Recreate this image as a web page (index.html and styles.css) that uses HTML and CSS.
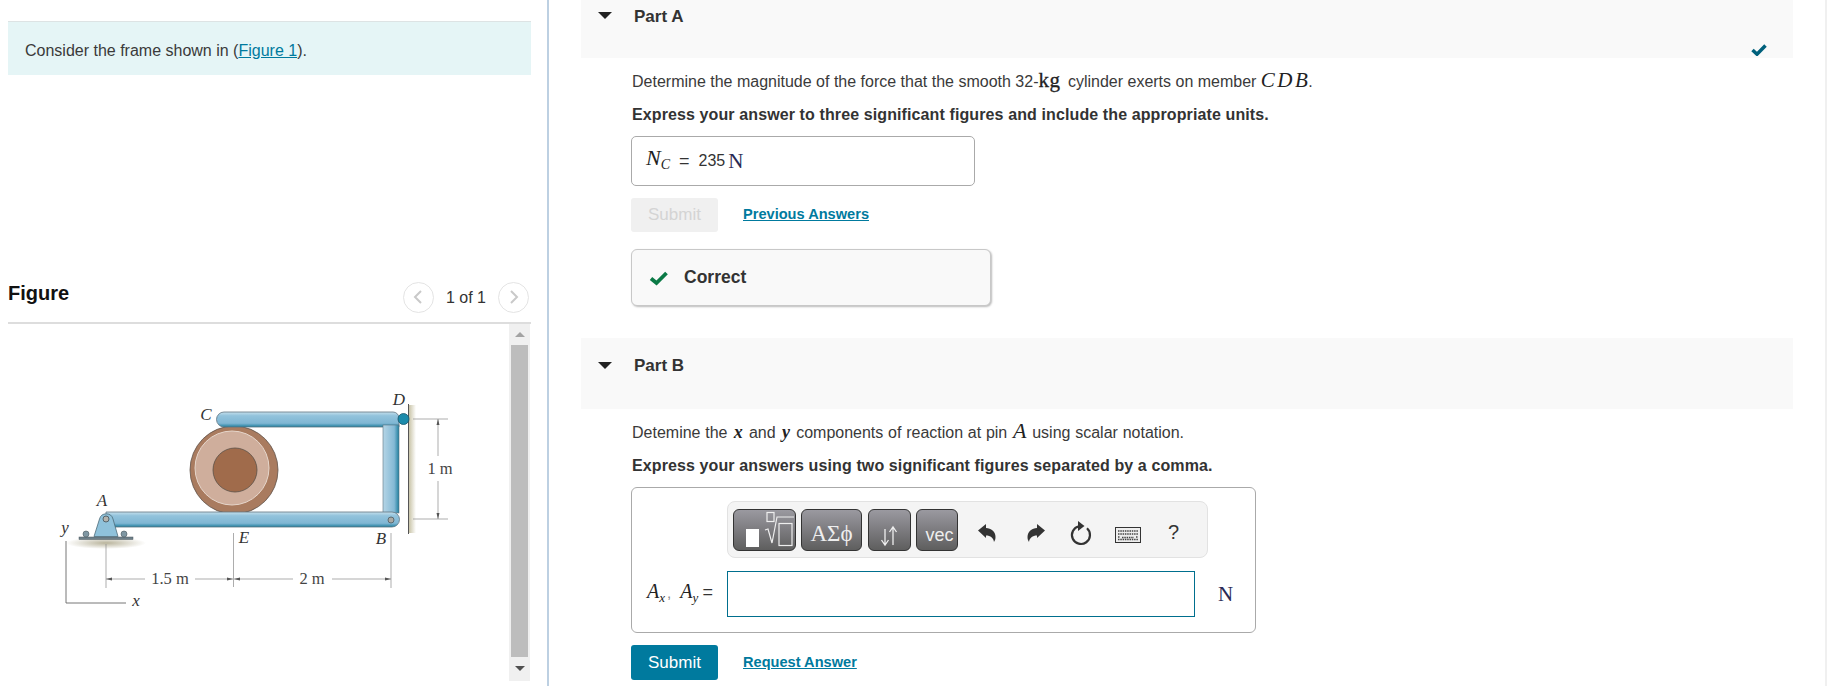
FILE: index.html
```html
<!DOCTYPE html>
<html lang="en">
<head>
<meta charset="utf-8">
<title>Frame problem</title>
<link rel="stylesheet" href="styles.css">
</head>
<body>
<div class="page">
  <aside class="left">
    <div class="intro">Consider the frame shown in (<a href="#" class="link">Figure 1</a>).</div>
    <div class="fig-head">
      <h2 class="fig-title">Figure</h2>
      <div class="pager">
        <span class="circle"><svg width="14" height="18" viewBox="0 0 14 18"><path class="chev" d="M10 3 4 9l6 6"/></svg></span>
        <span class="count">1 of 1</span>
        <span class="circle"><svg width="14" height="18" viewBox="0 0 14 18"><path class="chev" d="M4 3l6 6-6 6"/></svg></span>
      </div>
    </div>
    <div class="fig-body">
      <div class="fig-area">
        <svg class="frame" width="440" height="260" viewBox="0 0 440 260">
          <defs>
            <linearGradient id="wall" x1="0" x2="1" y1="0" y2="0"><stop offset="0" stop-color="#c9c4a8"/><stop offset="1" stop-color="#fff"/></linearGradient>
            <linearGradient id="bar" x1="0" x2="0" y1="0" y2="1"><stop offset="0" stop-color="#c5dfec"/><stop offset=".25" stop-color="#93c3dc"/><stop offset=".75" stop-color="#7fb6d3"/><stop offset="1" stop-color="#1f7f9e"/></linearGradient>
            <linearGradient id="vbar" x1="0" x2="1" y1="0" y2="0"><stop offset="0" stop-color="#b5d5e6"/><stop offset=".7" stop-color="#84b9d5"/><stop offset="1" stop-color="#1f7f9e"/></linearGradient>
            <radialGradient id="shade" cx=".5" cy=".5" r=".5"><stop offset="0" stop-color="#b9b49c"/><stop offset="1" stop-color="#fff"/></radialGradient>
          </defs>
          <g class="art">
            <rect x="369" y="34" width="7" height="128" fill="url(#wall)"/>
            <line x1="368.500" y1="33" x2="368.500" y2="163" class="dark"/>
            <ellipse cx="66" cy="172" rx="40" ry="6" fill="url(#shade)"/>
            <circle cx="194" cy="99" r="44" fill="#a97b5f" stroke="#5e5148" stroke-width=".8"/>
            <circle cx="192" cy="97" r="37" fill="#cfae9c" stroke="#e6d6cb" stroke-width="1"/>
            <circle cx="195" cy="99" r="22" fill="#a06b4b" stroke="#5b5048" stroke-width=".8"/>
            <path d="M184 41H353a6 6 0 0 1 6 6V56H184a7.500 7.500 0 0 1 0-15z" fill="url(#bar)" stroke="#5f7480" stroke-width=".8"/>
            <rect x="343" y="54" width="16" height="88" fill="url(#vbar)" stroke="#5f7480" stroke-width=".6"/>
            <path d="M66 141H352a7 7 0 0 1 0 15H66z" fill="url(#bar)" stroke="#5f7480" stroke-width=".8"/>
            <circle cx="351" cy="149" r="3" fill="#a9a9a4" stroke="#5c6a70"/>
            <circle cx="363.500" cy="48" r="5.500" fill="#1c8bab" stroke="#17566a" stroke-width=".8"/>
            <rect x="39" y="166" width="54" height="2.500" fill="#6d7f88" stroke="#4e5a60" stroke-width=".5"/>
            <circle cx="46" cy="163" r="3" fill="#7f97a3" stroke="#46555c" stroke-width=".6"/>
            <circle cx="84" cy="163" r="3" fill="#7f97a3" stroke="#46555c" stroke-width=".6"/>
            <path d="M54 165.500 59.500 148a7 7 0 0 1 13.500 0L78 165.500z" fill="#8fc2db" stroke="#4d6b79" stroke-width=".8"/>
            <circle cx="66" cy="148" r="3" fill="#b3b3ad" stroke="#55646b"/>
            <path class="thin" d="M66 173v44M193.500 162v54M351 162v55M66 208h39M155 208h38M194 208h59M292 208h59M373 48h35M373 148h35M398 48v37M398 110v38"/>
            <path class="axis" d="M26 170v62h60"/>
            <path class="tip" d="M66 208l6-1.500v3zM193 208l-6-1.500v3zM194 208l6-1.500v3zM351 208l-6-1.500v3zM398 48l-1.500 6h3zM398 148l-1.500-6h3z"/>
          </g>
          <text class="lbl" x="62" y="135" text-anchor="middle">A</text>
          <text class="lbl" x="166" y="49" text-anchor="middle">C</text>
          <text class="lbl" x="359" y="34" text-anchor="middle">D</text>
          <text class="lbl" x="204" y="172" text-anchor="middle">E</text>
          <text class="lbl" x="341" y="173" text-anchor="middle">B</text>
          <text class="lbl" x="25" y="162" text-anchor="middle">y</text>
          <text class="lbl" x="96" y="235" text-anchor="middle">x</text>
          <text class="dim" x="130" y="213" text-anchor="middle">1.5 m</text>
          <text class="dim" x="272" y="213" text-anchor="middle">2 m</text>
          <text class="dim" x="400" y="103" text-anchor="middle">1 m</text>
        </svg>
      </div>
      <div class="scroll">
        <span class="arrow up"></span>
        <span class="thumb"></span>
        <span class="arrow down"></span>
      </div>
    </div>
  </aside>

  <main class="right">
    <header class="part part-a">
      <span class="tri"></span>
      <h3 class="part-title">Part A</h3>
      <svg class="done" width="16" height="12" viewBox="0 0 16 12"><path d="M1.500 6 6 10.200 14.500 1.500" /></svg>
    </header>
    <div class="part-body">
      <p class="txt first">Determine the magnitude of the force that the smooth 32-<span class="unit">kg</span> cylinder exerts on member <span class="mvar wide">CDB</span>.</p>
      <p class="txt strong">Express your answer to three significant figures and include the appropriate units.</p>
      <div class="answer">
        <span class="mvar big">N<sub class="msub">C</sub></span><span class="eq">=</span><span class="val">235</span><span class="nunit">N</span>
      </div>
      <div class="actions">
        <button class="btn off" type="button">Submit</button>
        <a href="#" class="link act">Previous Answers</a>
      </div>
      <div class="correct">
        <svg class="ok" width="20" height="16" viewBox="0 0 20 16"><path d="M2 8.500 7.500 13 17.500 3"/></svg>
        <span>Correct</span>
      </div>
    </div>

    <header class="part part-b">
      <span class="tri"></span>
      <h3 class="part-title">Part B</h3>
    </header>
    <div class="part-body">
      <p class="txt first spaced">Detemine the <span class="mvar small">x</span> and <span class="mvar small">y</span> components of reaction at pin <span class="mvar capital">A</span> using scalar notation.</p>
      <p class="txt strong">Express your answers using two significant figures separated by a comma.</p>
      <div class="mathbox">
        <div class="toolbar">
          <span class="tbtn t1">
            <svg width="60" height="40" viewBox="0 0 60 40">
              <rect x="11" y="19" width="13" height="18" fill="#fff"/>
              <g class="tpl">
                <rect x="32" y="2.500" width="7" height="9"/>
                <path d="M30 20l3-1 4 14 5-26h17"/>
                <rect x="44" y="13.500" width="13" height="22"/>
              </g>
            </svg>
          </span>
          <span class="tbtn t2">ΑΣϕ</span>
          <span class="tbtn t3">
            <svg width="24" height="26" viewBox="0 0 24 26">
              <path class="arr" d="M7 8v15M3.500 19 7 24l3.500-5M15 24V7M11.500 11 15 6l3.500 5"/>
            </svg>
          </span>
          <span class="tbtn t4">vec</span>
          <span class="tools">
            <svg class="tool undo" width="20" height="20" viewBox="0 0 20 20"><path d="M1 7.500 9 1v4c5 0 9.500 3.500 9.500 9 0 2-.5 3.500-1.500 5-.5-4-3.500-6.500-8-6.500V15z"/></svg>
            <svg class="tool redo" width="20" height="20" viewBox="0 0 20 20"><path d="M19 7.500 11 1v4C6 5 1.500 8.500 1.500 14c0 2 .5 3.500 1.500 5 .5-4 3.500-6.500 8-6.500V15z"/></svg>
            <svg class="reload" width="24" height="26" viewBox="0 0 24 26"><path class="ring" d="M18 8.300a9 9 0 1 1-8-2.100"/><path class="wedge" d="M9 1v10l6.500-5z"/></svg>
            <svg class="kbd" width="26" height="16" viewBox="0 0 26 16">
              <rect x=".5" y=".5" width="25" height="15" class="kb-o"/>
              <path class="kb-k" d="M3 4h20M3 7h20M3 10h2M7 10.500h12M21 10h2M3 12.500h20"/>
            </svg>
            <span class="help">?</span>
          </span>
        </div>
        <label class="mlabel"><span class="mvar">A<sub class="msub">x</sub></span><span class="comma">,</span> <span class="mvar">A<sub class="msub">y</sub></span> <span class="lab-eq">=</span></label>
        <input class="minput" type="text" aria-label="answer">
        <span class="nunit munit">N</span>
      </div>
      <div class="actions">
        <button class="btn on" type="button">Submit</button>
        <a href="#" class="link act">Request Answer</a>
      </div>
    </div>
  </main>
  <div class="edge"></div>
</div>
</body>
</html>
```
FILE: styles.css
```css
* { box-sizing: border-box; }
html, body { margin: 0; padding: 0; height: 686px; overflow: hidden; background: #fff; }
body { font-family: "Liberation Sans", Arial, sans-serif; font-size: 16px; color: #333; }
.page { display: grid; grid-template-columns: 549px 1fr 2px; height: 686px; overflow: hidden; }
.link { color: #007a9e; text-decoration: underline; }

/* left column */
.left { border-right: 2px solid #bdd0e2; padding-left: 8px; padding-right: 16px; height: 686px; }
.intro { margin-top: 21px; height: 54px; background: #e5f5f6; border-top: 1px solid #dde3e4; padding: 0 0 0 17px; line-height: 57px; font-size: 16px; color: #3a3a3a; }
.fig-head { margin-top: 203px; height: 46px; border-bottom: 2px solid #ddd; display: flex; align-items: center; justify-content: space-between; padding-bottom: 6px; }
.fig-title { margin: -8px 0 0; font-size: 20px; font-weight: 700; color: #111; }
.pager { display: flex; align-items: center; gap: 12px; padding-right: 2px; }
.circle { width: 31px; height: 31px; border: 1px solid #e4e4e4; border-radius: 50%; display: flex; align-items: center; justify-content: center; }
.chev { fill: none; stroke: #c9c9c9; stroke-width: 2; }
.count { font-size: 16px; color: #333; padding-top: 2px; }
.fig-body { display: flex; height: 357px; }
.fig-area { width: 501px; padding: 47px 0 0 32px; }
.frame { display: block; }
.art { filter: blur(.3px); }
.thin { fill: none; stroke: #8a8a8a; stroke-width: .7; }
.axis { fill: none; stroke: #666; stroke-width: .9; }
.tip { fill: #555; }
.dark { stroke: #555; stroke-width: 1; }
.lbl { font: italic 17px "Liberation Serif", serif; fill: #333; }
.dim { font: 16.500px "Liberation Serif", serif; fill: #444; }
.scroll { width: 21px; height: 357px; background: #f0f0f0; display: flex; flex-direction: column; align-items: center; }
.arrow { width: 0; height: 0; border-left: 5px solid transparent; border-right: 5px solid transparent; }
.arrow.up { border-bottom: 5px solid #a3a3a3; margin-top: 8px; margin-bottom: 8px; }
.arrow.down { border-top: 5px solid #505050; margin-top: 9px; }
.thumb { width: 17px; height: 312px; background: #bdbdbd; }

/* right column */
.right { margin-left: 32px; margin-right: 32px; height: 686px; overflow: hidden; }
.edge { background: #f0f0f0; }
.part { background: #f9f9f9; display: flex; padding-left: 17px; }
.part-a { height: 58px; }
.part-b { height: 71px; margin-top: 32px; }
.tri { width: 0; height: 0; margin-top: 12px; border-left: 7px solid transparent; border-right: 7px solid transparent; border-top: 7px solid #222; }
.part-title { margin: 7px 0 0 22px; font-size: 17px; line-height: 20px; font-weight: 700; color: #333; }
.part-b .tri { margin-top: 24px; }
.part-b .part-title { margin-top: 18px; }
.done { margin-left: auto; margin-right: 26px; align-self: flex-end; margin-bottom: 2px; fill: none; stroke: #00607c; stroke-width: 3.500; }
.part-body { padding-left: 50px; }
.txt { margin: 9px 0 0; padding-left: 1px; line-height: 24px; font-size: 16px; color: #3a3a3a; white-space: nowrap; }
.txt.first { margin-top: 12px; }
.txt.spaced { word-spacing: .3px; }
.txt.strong { font-weight: 700; color: #333; letter-spacing: .11px; }
.unit { font: 21px/0 "Liberation Serif", serif; letter-spacing: .5px; margin-right: 3px; color: #222; -webkit-text-stroke: .3px #222; }
.mvar { font-family: "Liberation Serif", serif; font-style: italic; font-size: 20px; line-height: 0; color: #222; }
.mvar.small { font-size: 18px; font-weight: 700; margin: 0 1.500px; }
.mvar.capital { font-size: 22px; margin: 0 1px; }
.wide { font-size: 21px; letter-spacing: 2.500px; margin-right: -2px; }
.msub { font-size: 14px; vertical-align: -4px; line-height: 0; }
.answer { margin-top: 9px; width: 344px; height: 50px; border: 1px solid #aaa; border-radius: 5px; display: flex; align-items: center; padding-left: 14px; }
.big { font-size: 22px; }
.eq { margin: 0 9px; font-size: 18px; line-height: 18px; }
.val { font-size: 16px; margin-right: 3px; }
.nunit { font-family: "Liberation Serif", serif; font-size: 21px; color: #2a2a55; }
.actions { margin-top: 12px; display: flex; align-items: center; gap: 25px; }
.btn { width: 87px; height: 35px; border: 0; border-radius: 3px; font: 17px "Liberation Sans", Arial, sans-serif; padding: 0; }
.btn.off { background: #f0f0f0; color: #d4d4d4; height: 34px; }
.btn.on { background: #007a9e; color: #fff; }
.act { font-size: 14.600px; font-weight: 700; margin-top: -2px; }
.correct { margin-top: 17px; width: 360px; height: 57px; background: #f9f9f9; border: 1px solid #c8c8c8; border-radius: 6px; box-shadow: 1px 1px 2px #bbb; display: flex; align-items: center; gap: 15px; padding-left: 17px; font-size: 17.500px; font-weight: 700; color: #333; }
.ok { fill: none; stroke: #0b7a46; stroke-width: 3.800; }

.mathbox { margin-top: 9px; width: 625px; height: 146px; border: 1px solid #aaa; border-radius: 6px; padding-top: 13px; display: grid; grid-template-columns: 95px 468px 1fr; grid-template-rows: 57px 46px; row-gap: 13px; align-items: center; }
.toolbar { grid-column: 2 / 4; width: 481px; height: 57px; background: #f4f4f4; border: 1px solid #e2e2e2; border-radius: 8px; display: flex; align-items: center; padding-left: 5px; }
.tbtn { height: 42px; border: 1px solid #333; border-radius: 6px; background: linear-gradient(#9a99a0, #5e5e5e); color: #eee; display: flex; align-items: center; justify-content: center; }
.t1 { width: 63px; }
.t2 { width: 61px; margin-left: 5px; font: 23px "Liberation Serif", serif; padding-top: 8px; }
.t3 { width: 43px; margin-left: 6px; padding-top: 8px; }
.t4 { width: 42px; margin-left: 5px; font-size: 18px; padding: 12px 0 0 5px; overflow: hidden; }
.tpl { fill: none; stroke: #eee; stroke-width: 1.200; }
.arr { fill: none; stroke: #eee; stroke-width: 1.300; }
.tools { display: flex; align-items: center; margin-left: 19px; padding-top: 6px; }
.tool { fill: #333; }
.redo { margin-left: 29px; }
.reload { margin-left: 23px; }
.ring { fill: none; stroke: #333; stroke-width: 2.200; }
.wedge { fill: #333; }
.kbd { margin-left: 22px; margin-top: 5px; }
.kb-o { fill: #eee; stroke: #333; }
.kb-k { fill: none; stroke: #444; stroke-width: 1.300; stroke-dasharray: 1.500 .8; }
.help { margin-left: 27px; font-size: 20px; color: #333; margin-top: 0; }
.mlabel { padding: 0 0 3px 15px; font-size: 15px; white-space: nowrap; }
.mlabel .mvar { font-size: 20px; }
.mlabel .msub { font-size: 13px; }
.comma { color: #888; margin: 0 5px 0 2px; }
.lab-eq { font-size: 18px; }
.minput { width: 468px; height: 46px; border: 1px solid #006f8e; background: #fff; padding: 0; }
.munit { padding-left: 23px; }
```
